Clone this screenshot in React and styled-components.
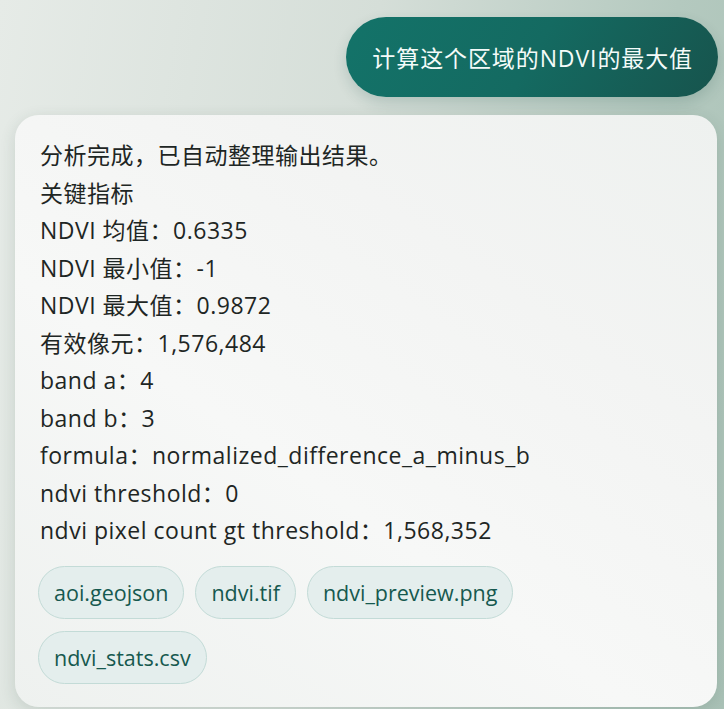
import styled, { createGlobalStyle } from "styled-components";

const GlobalStyle = createGlobalStyle`
  html, body {
    margin: 0;
    padding: 0;
  }
  body {
    font-family: "Open Sans", "Noto Sans CJK SC", sans-serif;
    background: linear-gradient(100deg, #e6ebe7 0%, #d5ded8 45%, #b4c9bf 80%, #aac2b7 100%);
    min-height: 709px;
  }
`;

const stats = [
  "分析完成，已自动整理输出结果。",
  "关键指标",
  "NDVI 均值：0.6335",
  "NDVI 最小值：-1",
  "NDVI 最大值：0.9872",
  "有效像元：1,576,484",
  "band a：4",
  "band b：3",
  "formula：normalized_difference_a_minus_b",
  "ndvi threshold：0",
  "ndvi pixel count gt threshold：1,568,352",
];

const files = ["aoi.geojson", "ndvi.tif", "ndvi_preview.png", "ndvi_stats.csv"];

const App = () => {
  return (
    <>
      <GlobalStyle />
      <Thread>
        <UserBubble>计算这个区域的NDVI的最大值</UserBubble>
        <ReplyCard>
          <Lines>
            {stats.map((line) => (
              <Line key={line}>{line}</Line>
            ))}
          </Lines>
          <Chips>
            {files.map((name) => (
              <Chip key={name}>{name}</Chip>
            ))}
          </Chips>
        </ReplyCard>
      </Thread>
    </>
  );
};

export default App;

const Thread = styled.div`
  display: flex;
  flex-direction: column;
  align-items: flex-end;
  gap: 18px;
  padding: 17px 6px 0 15px;
  box-sizing: border-box;
  width: 724px;
  height: 709px;
  overflow: hidden;
`;

const UserBubble = styled.div`
  display: flex;
  align-items: center;
  height: 80px;
  padding: 0 25px 0 26px;
  box-sizing: border-box;
  border-radius: 40px;
  background: linear-gradient(120deg, #137369 0%, #146a61 50%, #17544d 100%);
  color: #f4fbf9;
  font-size: 23px;
  letter-spacing: 0.9px;
  box-shadow: 0 6px 14px rgba(20, 70, 60, 0.16);
`;

const ReplyCard = styled.div`
  align-self: stretch;
  margin-right: 1px;
  padding: 22px 25px 23px;
  border-radius: 24px;
  background: linear-gradient(35deg, #eef1ef 0%, #f7f8f7 40%, #f3f4f3 70%, #eef1ef 100%);
  box-shadow: 0 4px 16px rgba(40, 70, 60, 0.14);
  color: #1e2624;
`;

const Lines = styled.div`
  display: flex;
  flex-direction: column;
`;

const Line = styled.div`
  font-size: 23px;
  letter-spacing: 0.5px;
  line-height: 37.5px;
  white-space: nowrap;
`;

const Chips = styled.div`
  display: flex;
  flex-wrap: wrap;
  gap: 12px 11px;
  margin: 16px 0 0 -2px;
  max-width: 520px;
`;

const Chip = styled.div`
  display: flex;
  align-items: center;
  height: 53px;
  padding: 0 15px;
  box-sizing: border-box;
  border-radius: 27px;
  border: 1px solid #c3dbd7;
  background: #e4eeed;
  color: #16594f;
  font-size: 21.5px;
`;
